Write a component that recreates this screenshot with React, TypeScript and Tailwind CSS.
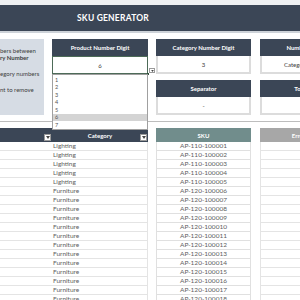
import React from 'react';

type Row = { category: string, sku: string };

const rows: Row[] = Array.from({length: 18}, (_, i) => {
    const n = i + 1;
    const lighting = n <= 5;
    return {
        category: lighting ? 'Lighting' : 'Furniture',
        sku: `AP-${lighting ? '110' : '120'}-${String(100000 + n)}`,
    };
});

const FilterButton = () => (
    <div className="w-[7px] h-[7px] bg-white border border-[#9a9a9a] flex items-center justify-center">
        <svg width="4" height="3" viewBox="0 0 4 3"><path d="M0 0 L4 0 L2 3 Z" fill="#444"/></svg>
    </div>
);

const Card = ({title, value, selected}: {title: string, value: string, selected?: boolean}) => (
    <div className="flex flex-col">
        <div className="h-[17px] bg-[#3b4656] text-white font-bold text-[6px] flex items-center justify-center whitespace-nowrap">
            {title}
        </div>
        <div className={selected
            ? "h-[18px] bg-white border border-[#4d6b58] text-[6px] text-[#404040] flex items-center justify-center whitespace-nowrap"
            : "h-[18px] bg-white border-2 border-t-0 border-[#dcdcdc] text-[6px] text-[#404040] flex items-center justify-center whitespace-nowrap"}>
            {value}
        </div>
    </div>
);

const App = () => {
    return (
        <div className="w-[300px] h-[300px] overflow-hidden bg-white font-['Lato',sans-serif]">
            <div className="w-[360px]">
                <div className="h-[5px] bg-[#eef0f2]"/>
                <div className="h-[26px] bg-[#3b4656] flex items-center pl-[77px] text-white font-bold text-[8.5px] tracking-[0.2px]">
                    SKU GENERATOR
                </div>
                <div className="h-[2px] bg-[#cdd2d8]"/>

                <div className="flex mt-[6px]">
                    <div className="w-[52px]">
                        <div className="w-[44px] h-[76px] bg-[#d6dce4] text-[6px] text-[#404040] leading-[7px] pt-[8px] whitespace-nowrap overflow-hidden">
                            <div>bers between</div>
                            <div className="font-bold">ry Number</div>
                            <div className="mt-[9px]">egory numbers</div>
                            <div className="mt-[9px]">nt to remove</div>
                        </div>
                    </div>
                    <div className="w-[96px] relative">
                        <Card title="Product Number Digit" value="6" selected/>
                        <div className="absolute left-[97px] top-[29px] w-[6px] h-[5px] bg-white border border-[#9a9a9a] flex items-center justify-center">
                            <svg width="3" height="2" viewBox="0 0 4 3"><path d="M0 0 L4 0 L2 3 Z" fill="#444"/></svg>
                        </div>
                        <div className="absolute left-[95px] top-[34px] w-[2px] h-[2px] bg-[#2f4f3a]"/>
                        <div className="absolute left-0 top-[35px] w-[96px] bg-white border border-[#a0a0a0] pt-[1px] z-10">
                            {[1, 2, 3, 4, 5, 6, 7].map(n => (
                                <div key={n} className={n === 6
                                    ? "h-[7.5px] bg-[#d4d4d4] text-[5.5px] text-[#555] pl-[2px] flex items-center"
                                    : "h-[7.5px] text-[5.5px] text-[#555] pl-[2px] flex items-center"}>
                                    {n}
                                </div>
                            ))}
                        </div>
                    </div>
                    <div className="w-[8px]"/>
                    <div className="w-[95px] flex flex-col gap-[6px]">
                        <Card title="Category Number Digit" value="3"/>
                        <Card title="Separator" value="-"/>
                    </div>
                    <div className="w-[9px]"/>
                    <div className="w-[95px] flex flex-col gap-[6px]">
                        <Card title="Number Format" value="Category-Product"/>
                        <Card title="Total SKU" value=""/>
                    </div>
                </div>

                <div className="h-[1px] bg-[#bdbdbd] mt-[6px]"/>

                <div className="flex mt-[6px] h-[14px]">
                    <div className="w-[148px] bg-[#3b4656] flex">
                        <div className="w-[52px] flex items-end justify-end pb-[1px] pr-[1px]">
                            <FilterButton/>
                        </div>
                        <div className="w-[96px] relative flex items-center justify-center text-white font-bold text-[6px]">
                            Category
                            <div className="absolute right-[1px] bottom-[1px]">
                                <FilterButton/>
                            </div>
                        </div>
                    </div>
                    <div className="w-[8px]"/>
                    <div className="w-[95px] bg-[#718d8c] flex items-center justify-center text-white font-bold text-[6px]">
                        SKU
                    </div>
                    <div className="w-[9px]"/>
                    <div className="w-[95px] bg-[#a7a7a7] flex items-center justify-center text-white font-bold text-[6px]">
                        Error Check
                    </div>
                </div>

                {rows.map((row, i) => (
                    <div key={i} className="flex h-[9px] text-[6.5px] text-[#606060]">
                        <div className="w-[52px] border-b border-[#e4e4e4]"/>
                        <div className="w-[96px] border-b border-r border-[#e4e4e4] pl-[1px] flex items-center">
                            {row.category}
                        </div>
                        <div className="w-[8px]"/>
                        <div className="w-[95px] border-b border-x border-[#e0e0e0] flex items-center justify-center">
                            {row.sku}
                        </div>
                        <div className="w-[9px]"/>
                        <div className="w-[95px] border-b border-l border-[#e4e4e4]"/>
                    </div>
                ))}
            </div>
        </div>
    );
};

export default App;
